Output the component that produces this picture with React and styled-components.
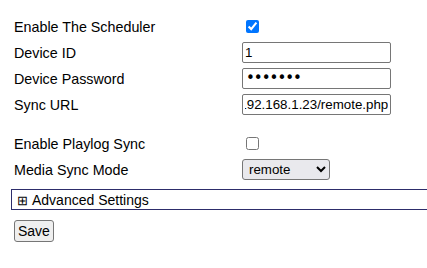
import React, { useEffect, useRef } from "react";
import styled, { createGlobalStyle } from "styled-components";

const GlobalStyle = createGlobalStyle`
  body {
    margin: 0;
    background: #ffffff;
    color: #000000;
    font-family: "Liberation Sans", Arial, sans-serif;
    overflow: hidden;
  }
`;

const StyledPage = styled.div`
  padding: 13px 0 0 11px;
`;

const StyledSection = styled.div`
  display: flex;
  flex-direction: column;
  margin-bottom: ${(p) => p.gap || 0}px;
`;

const StyledRow = styled.div`
  display: grid;
  grid-template-columns: 228px auto;
  align-items: center;
  height: 26px;
  padding-left: 3px;
`;

const StyledLabel = styled.label`
  font-size: 14.3px;
  padding-top: 2px;
  white-space: nowrap;
`;

const StyledControl = styled.div`
  display: flex;
  align-items: center;
`;

const StyledCheckbox = styled.input.attrs({ type: "checkbox" })`
  width: 13px;
  height: 13px;
  margin: 0 0 0 4px;
`;

const StyledTextInput = styled.input`
  box-sizing: border-box;
  width: 149px;
  height: 21px;
  padding: 1px 2px;
  border: 1px solid #767676;
  border-radius: 2px;
  font-family: "Liberation Sans", Arial, sans-serif;
  font-size: 13.333px;
  color: #000000;
  background: #ffffff;
`;

const StyledPasswordInput = styled(StyledTextInput).attrs({ type: "password" })`
  font-family: "DejaVu Sans", sans-serif;
  font-size: 15px;
  letter-spacing: -1px;
  padding: 0 3px;
`;

const StyledSelect = styled.select`
  box-sizing: border-box;
  width: 88px;
  height: 21px;
  padding: 0 0 0 2px;
  border: 1px solid #767676;
  border-radius: 3px;
  background-color: #e9e9ed;
  font-family: "Liberation Sans", Arial, sans-serif;
  font-size: 13.333px;
  color: #000000;
`;

const StyledDetails = styled.div`
  margin: 7px -30px 0 0;
  padding: 3px 0 0 5px;
  box-sizing: border-box;
  border: 1px solid #2d2d6b;
  border-right: none;
  height: 21px;
  font-size: 14px;
  line-height: 15px;
  white-space: nowrap;
`;

const StyledToggle = styled.span`
  font-size: 13px;
  margin-right: 4px;
`;

const StyledButton = styled.button`
  margin: 10px 0 0 3px;
  height: 22px;
  padding: 1px 3px;
  border: 1px solid #767676;
  border-radius: 3px;
  background: #efefef;
  font-family: "Liberation Sans", Arial, sans-serif;
  font-size: 14px;
  color: #000000;
`;

function UrlInput({ value }) {
  const ref = useRef(null);
  useEffect(() => {
    // show the tail of the url, as the input was left scrolled
    if (ref.current) ref.current.scrollLeft = ref.current.scrollWidth;
  }, []);
  return <StyledTextInput ref={ref} type="text" defaultValue={value} />;
}

export default function App() {
  return (
    <>
      <GlobalStyle />
      <StyledPage>
        <StyledSection gap={13}>
          <StyledRow>
            <StyledLabel>Enable The Scheduler</StyledLabel>
            <StyledControl>
              <StyledCheckbox defaultChecked />
            </StyledControl>
          </StyledRow>
          <StyledRow>
            <StyledLabel>Device ID</StyledLabel>
            <StyledControl>
              <StyledTextInput type="text" defaultValue="1" />
            </StyledControl>
          </StyledRow>
          <StyledRow>
            <StyledLabel>Device Password</StyledLabel>
            <StyledControl>
              <StyledPasswordInput defaultValue="1234567" />
            </StyledControl>
          </StyledRow>
          <StyledRow>
            <StyledLabel>Sync URL</StyledLabel>
            <StyledControl>
              <UrlInput value="http://192.168.1.23/remote.php" />
            </StyledControl>
          </StyledRow>
        </StyledSection>
        <StyledSection>
          <StyledRow>
            <StyledLabel>Enable Playlog Sync</StyledLabel>
            <StyledControl>
              <StyledCheckbox />
            </StyledControl>
          </StyledRow>
          <StyledRow>
            <StyledLabel>Media Sync Mode</StyledLabel>
            <StyledControl>
              <StyledSelect defaultValue="remote">
                <option value="remote">remote</option>
                <option value="local">local</option>
              </StyledSelect>
            </StyledControl>
          </StyledRow>
        </StyledSection>
        <StyledDetails>
          <StyledToggle>⊞</StyledToggle>
          Advanced Settings
        </StyledDetails>
        <StyledButton type="button">Save</StyledButton>
      </StyledPage>
    </>
  );
}
